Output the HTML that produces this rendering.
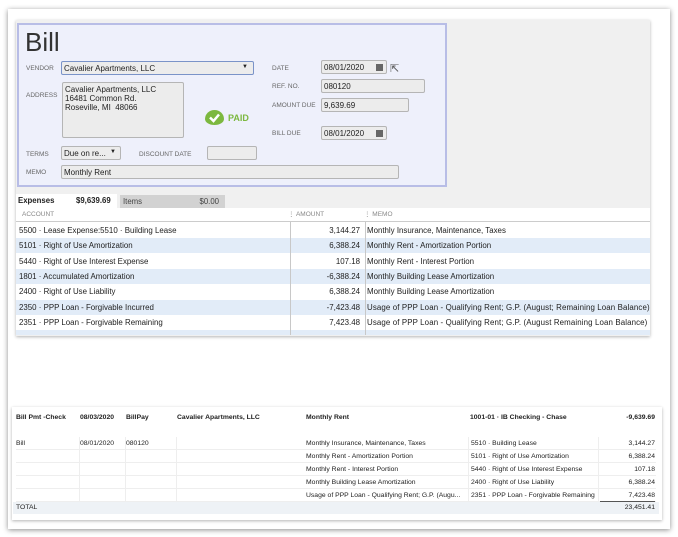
<!DOCTYPE html>
<html><head><style>
*{margin:0;padding:0;box-sizing:border-box}
body{width:678px;height:537px;background:#fff;font-family:"Liberation Sans",Arial,sans-serif;position:relative;overflow:hidden;color:#222}
.card{position:absolute;left:8px;top:9px;width:662px;height:520px;background:#fff;box-shadow:0 1px 5px rgba(0,0,0,.45)}
.a{position:absolute}
.top{position:absolute;left:16px;top:20px;width:634px;height:316px;background:#f0f0f0;box-shadow:0 1px 3px rgba(0,0,0,.3)}
.bill{position:absolute;left:17px;top:23px;width:430px;height:164px;background:#eef0fb;border:2px solid #b8bde6}
.lbl{position:absolute;font-size:6.5px;color:#666}
.inp{position:absolute;background:#ececec;border:1px solid #b5b5b5;border-radius:2px;font-size:8px;padding:2px 2px;color:#222;line-height:9px}
.tbl{position:absolute;left:16px;top:208px;width:634px;height:127px;background:#fff}
.row{position:absolute;left:0;width:634px;height:15px;font-size:7.9px;line-height:15px}
.row span{position:absolute}
.bl{background:#e2ecf8}
.b{position:absolute;font-size:6.8px;line-height:13px}
.r2{position:absolute;left:16px;width:640px;height:13px;border-bottom:1px solid #eee}
</style></head><body>
<div class="card"></div>
<div class="top"></div>
<div class="bill">
<div class="a" style="left:6px;top:2px;font-size:26px;color:#333">Bill</div>
<div class="lbl" style="left:7px;top:40px">VENDOR</div>
<div class="inp" style="left:42px;top:36px;width:193px;height:14px;border-color:#7a93c8">Cavalier Apartments, LLC<span style="position:absolute;right:5px;top:1px;font-size:6px">▼</span></div>
<div class="lbl" style="left:7px;top:67px">ADDRESS</div>
<div class="inp" style="left:43px;top:57px;width:122px;height:56px">Cavalier Apartments, LLC<br>16481 Common Rd.<br>Roseville, MI&nbsp; 48066</div>
<div class="a" style="left:186px;top:85px;width:19px;height:15px;background:#7cb83f;border-radius:50% 50% 50% 50%/60% 60% 40% 40%"><svg width="19" height="15"><path d="M5 7.5 L8.5 11 L14 4.5" stroke="#fff" stroke-width="2.5" fill="none"/></svg></div>
<div class="a" style="left:209px;top:88px;font-size:9px;font-weight:bold;color:#7cb83f">PAID</div>
<div class="lbl" style="left:7px;top:126px">TERMS</div>
<div class="inp" style="left:42px;top:121px;width:60px;height:14px">Due on re...<span style="position:absolute;right:4px;top:1px;font-size:6px">▼</span></div>
<div class="lbl" style="left:120px;top:126px">DISCOUNT DATE</div>
<div class="inp" style="left:188px;top:121px;width:50px;height:14px"></div>
<div class="lbl" style="left:7px;top:144px">MEMO</div>
<div class="inp" style="left:42px;top:140px;width:338px;height:14px">Monthly Rent</div>
<div class="lbl" style="left:253px;top:40px">DATE</div>
<div class="inp" style="left:302px;top:35px;width:66px;height:14px">08/01/2020<span style="position:absolute;right:3px;top:3px;width:7px;height:7px;background:#666"></span></div>
<div class="lbl" style="left:253px;top:58px">REF. NO.</div>
<div class="inp" style="left:302px;top:54px;width:104px;height:14px">080120</div>
<div class="lbl" style="left:253px;top:77px">AMOUNT DUE</div>
<div class="inp" style="left:302px;top:73px;width:88px;height:14px">9,639.69</div>
<div class="lbl" style="left:253px;top:105px">BILL DUE</div>
<div class="inp" style="left:302px;top:101px;width:66px;height:14px">08/01/2020<span style="position:absolute;right:3px;top:3px;width:7px;height:7px;background:#666"></span></div>
</div>
<div class="a" style="left:390px;top:62px;font-size:11px;color:#555">⇱</div>
<div class="a" style="left:16px;top:194px;width:101px;height:14px;background:#fff;font-size:7.8px;line-height:14px"><b style="position:absolute;left:2px;font-weight:bold">Expenses</b><b style="position:absolute;left:60px">$9,639.69</b></div>
<div class="a" style="left:120px;top:195px;width:105px;height:13px;background:#d2d2d2;font-size:7.8px;line-height:13px;color:#444"><span style="position:absolute;left:3px">Items</span><span style="position:absolute;right:6px">$0.00</span></div>
<div class="tbl">
<div class="row" style="top:0;height:14px;font-size:6.5px;line-height:14px;color:#888;border-bottom:1px solid #ccc"><span style="left:6px">ACCOUNT</span><span style="left:272px">⋮ AMOUNT</span><span style="left:348px">⋮ MEMO</span></div>
<div class="row" style="top:15px"><span style="left:3px">5500 · Lease Expense:5510 · Building Lease</span><span style="right:290px">3,144.27</span><span style="left:351px">Monthly Insurance, Maintenance, Taxes</span></div>
<div class="row bl" style="top:30px"><span style="left:3px">5101 · Right of Use Amortization</span><span style="right:290px">6,388.24</span><span style="left:351px">Monthly Rent - Amortization Portion</span></div>
<div class="row" style="top:46px"><span style="left:3px">5440 · Right of Use Interest Expense</span><span style="right:290px">107.18</span><span style="left:351px">Monthly Rent - Interest Portion</span></div>
<div class="row bl" style="top:61px"><span style="left:3px">1801 · Accumulated Amortization</span><span style="right:290px">-6,388.24</span><span style="left:351px">Monthly Building Lease Amortization</span></div>
<div class="row" style="top:76px"><span style="left:3px">2400 · Right of Use Liability</span><span style="right:290px">6,388.24</span><span style="left:351px">Monthly Building Lease Amortization</span></div>
<div class="row bl" style="top:92px"><span style="left:3px">2350 · PPP Loan - Forgivable Incurred</span><span style="right:290px">-7,423.48</span><span style="left:351px;letter-spacing:.12px">Usage of PPP Loan - Qualifying Rent; G.P. (August; Remaining Loan Balance)</span></div>
<div class="row" style="top:107px"><span style="left:3px">2351 · PPP Loan - Forgivable Remaining</span><span style="right:290px">7,423.48</span><span style="left:351px;letter-spacing:.12px">Usage of PPP Loan - Qualifying Rent; G.P. (August Remaining Loan Balance)</span></div>
<div class="row bl" style="top:122px;height:5px"></div>
<div class="a" style="left:274px;top:14px;width:1px;height:113px;background:#c8c8c8"></div>
<div class="a" style="left:349px;top:14px;width:1px;height:113px;background:#c8c8c8"></div>
</div>
<div class="a" style="left:12px;top:407px;width:650px;height:113px;background:#fff;box-shadow:0 1px 3px rgba(0,0,0,.3)"></div>
<div class="b" style="top:411px;left:16px;width:645px;font-weight:bold">
<span class="a" style="left:0">Bill Pmt -Check</span><span class="a" style="left:64px">08/03/2020</span><span class="a" style="left:110px">BillPay</span><span class="a" style="left:161px">Cavalier Apartments, LLC</span><span class="a" style="left:290px">Monthly Rent</span><span class="a" style="left:454px">1001-01 · IB Checking - Chase</span><span class="a" style="right:6px">-9,639.69</span></div>
<div class="r2" style="top:437px"></div><div class="r2" style="top:450px"></div><div class="r2" style="top:463px"></div><div class="r2" style="top:476px"></div><div class="r2" style="top:489px"></div>
<div class="a" style="left:79px;top:437px;width:1px;height:65px;background:#eee"></div>
<div class="a" style="left:125px;top:437px;width:1px;height:65px;background:#eee"></div>
<div class="a" style="left:176px;top:437px;width:1px;height:65px;background:#eee"></div>
<div class="a" style="left:468px;top:437px;width:1px;height:65px;background:#eee"></div>
<div class="a" style="left:598px;top:437px;width:1px;height:65px;background:#eee"></div>
<div class="b" style="top:437px;left:16px;width:645px">
<span class="a" style="left:0">Bill</span><span class="a" style="left:64px">08/01/2020</span><span class="a" style="left:110px">080120</span>
<span class="a" style="left:290px">Monthly Insurance, Maintenance, Taxes</span><span class="a" style="left:455px">5510 · Building Lease</span><span class="a" style="right:6px">3,144.27</span></div>
<div class="b" style="top:450px;left:16px;width:645px"><span class="a" style="left:290px">Monthly Rent - Amortization Portion</span><span class="a" style="left:455px">5101 · Right of Use Amortization</span><span class="a" style="right:6px">6,388.24</span></div>
<div class="b" style="top:463px;left:16px;width:645px"><span class="a" style="left:290px">Monthly Rent - Interest Portion</span><span class="a" style="left:455px">5440 · Right of Use Interest Expense</span><span class="a" style="right:6px">107.18</span></div>
<div class="b" style="top:476px;left:16px;width:645px"><span class="a" style="left:290px">Monthly Building Lease Amortization</span><span class="a" style="left:455px">2400 · Right of Use Liability</span><span class="a" style="right:6px">6,388.24</span></div>
<div class="b" style="top:489px;left:16px;width:645px"><span class="a" style="left:290px">Usage of PPP Loan - Qualifying Rent; G.P. (Augu...</span><span class="a" style="left:455px">2351 · PPP Loan - Forgivable Remaining</span><span class="a" style="right:6px">7,423.48</span></div>
<div class="a" style="left:600px;top:501px;width:55px;height:1px;background:#555"></div>
<div class="b" style="top:502px;left:13px;width:646px;background:#eef2f6;height:12px;line-height:12px"><span class="a" style="left:3px">TOTAL</span><span class="a" style="right:4px">23,451.41</span></div>
</body></html>
